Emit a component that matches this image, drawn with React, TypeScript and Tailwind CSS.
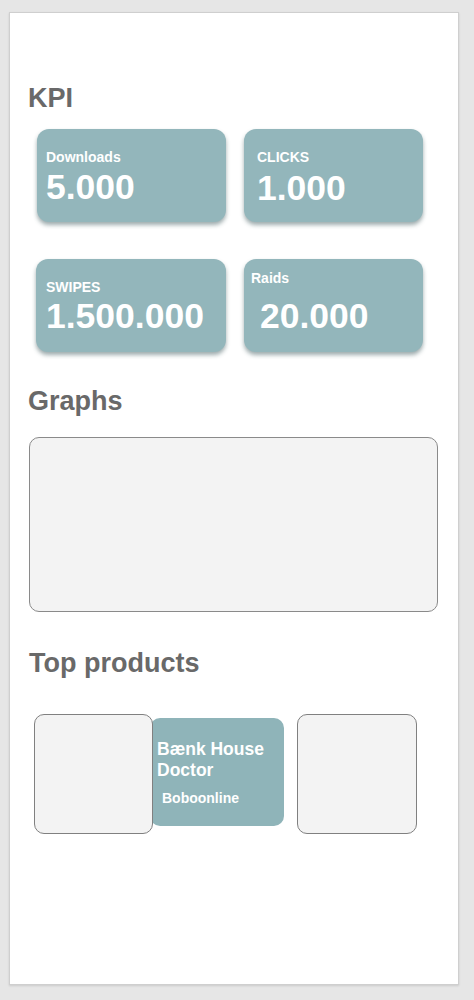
const font = { fontFamily: '"Liberation Sans", Arial, sans-serif' };

type Kpi = {
  label: string;
  value: string;
  width: string;
  labelPad: string;
  valuePad: string;
};

function KpiCard({ kpi }: { kpi: Kpi }) {
  return (
    <div
      className={`${kpi.width} h-[93px] shrink-0 rounded-[12px] bg-[#93b6bb] text-white shadow-[0_3px_4px_rgba(40,70,75,0.45)] flex flex-col`}
    >
      <div className={`${kpi.labelPad} text-[14px] leading-[16px] font-bold`}>{kpi.label}</div>
      <div className={`${kpi.valuePad} text-[35.5px] leading-[35px] font-bold`}>{kpi.value}</div>
    </div>
  );
}

export default function App() {
  const rowOne: Kpi[] = [
    { label: 'Downloads', value: '5.000', width: 'w-[189px]', labelPad: 'pt-[20px] pl-[9px]', valuePad: 'mt-[5px] pl-[9px]' },
    { label: 'CLICKS', value: '1.000', width: 'w-[179px]', labelPad: 'pt-[20px] pl-[13px]', valuePad: 'mt-[6px] pl-[13px]' },
  ];
  const rowTwo: Kpi[] = [
    { label: 'SWIPES', value: '1.500.000', width: 'w-[190px]', labelPad: 'pt-[20px] pl-[10px]', valuePad: 'mt-[4px] pl-[10px]' },
    { label: 'Raids', value: '20.000', width: 'w-[179px]', labelPad: 'pt-[11px] pl-[7px]', valuePad: 'mt-[13px] pl-[16px]' },
  ];

  return (
    <div className="min-h-[1000px] bg-[#e6e6e6] pt-[12px] pl-[9px]" style={font}>
      <div className="w-[450px] h-[973px] bg-white border border-[#cfcfcf] shadow-[0_1px_2px_rgba(0,0,0,0.12)] pt-[72px]">
        <h2 className="pl-[18px] text-[27px] leading-[27px] font-bold text-[#696969]">KPI</h2>

        <div className="mt-[17px] flex gap-[18px] pl-[27px]">
          {rowOne.map((k) => (
            <KpiCard key={k.label} kpi={k} />
          ))}
        </div>
        <div className="mt-[37px] flex gap-[18px] pl-[26px]">
          {rowTwo.map((k) => (
            <KpiCard key={k.label} kpi={k} />
          ))}
        </div>

        <h2 className="mt-[36px] pl-[18px] text-[27px] leading-[27px] font-bold text-[#696969]">Graphs</h2>
        <div className="mt-[22px] ml-[19px] w-[409px] h-[175px] rounded-[10px] border border-[#8a8a8a] bg-[#f3f3f3]" />

        <h2 className="mt-[38px] pl-[19px] text-[27px] leading-[27px] font-bold text-[#696969]">Top products</h2>

        <div className="mt-[37px] ml-[24px] flex items-start">
          <div className="relative z-10 w-[119px] h-[120px] shrink-0 rounded-[10px] border border-[#808080] bg-[#f3f3f3]" />
          <div className="-ml-[3px] mt-[4px] w-[134px] h-[108px] shrink-0 rounded-[10px] bg-[#8fb4b9] text-white">
            <div className="pt-[21px] pl-[7px] text-[17.5px] leading-[21px] font-bold">
              Bænk House
              <br />
              Doctor
            </div>
            <div className="mt-[9px] pl-[12px] text-[14px] leading-[16px] font-bold">Boboonline</div>
          </div>
          <div className="ml-[13px] w-[120px] h-[120px] shrink-0 rounded-[10px] border border-[#808080] bg-[#f3f3f3]" />
        </div>
      </div>
    </div>
  );
}
